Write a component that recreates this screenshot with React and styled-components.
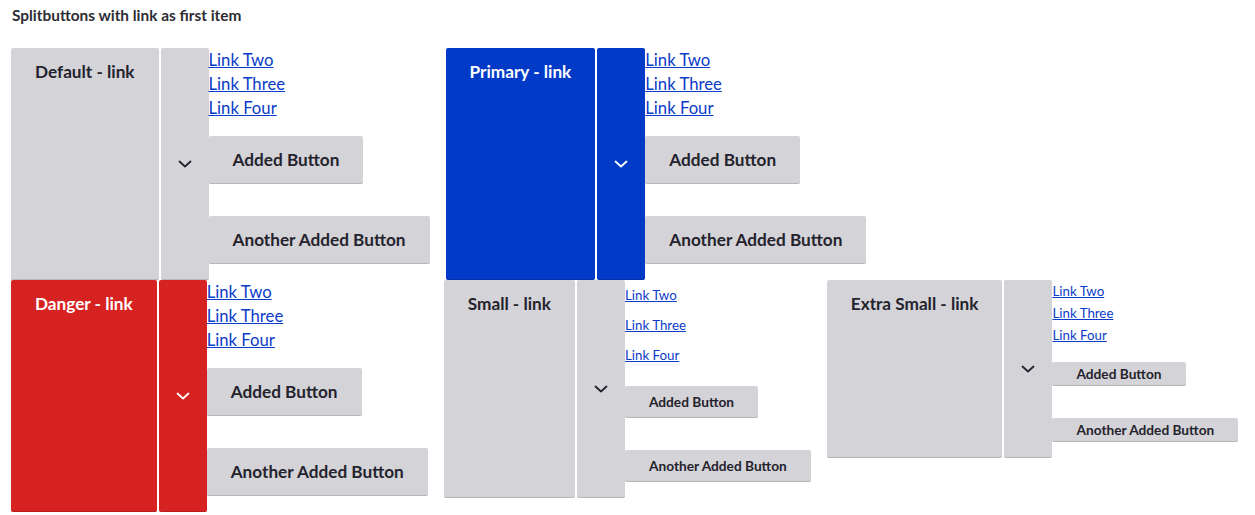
import React from "react";
import styled, { createGlobalStyle, css } from "styled-components";

const GlobalStyle = createGlobalStyle`
  body {
    margin: 0;
    background: #fff;
    font-family: Lato, "Noto Sans", sans-serif;
    color: #24232d;
  }
`;

const colors = {
  default: { bg: "#d4d3d8", fg: "#24232d" },
  primary: { bg: "#003ac7", fg: "#ffffff" },
  danger: { bg: "#d72222", fg: "#ffffff" },
};

const sizes = {
  normal: { font: "17.2px", linkFont: "16.7px", linkLine: "24px", linkPad: "0", btnPad: "12px 24px" },
  small: { font: "13.7px", linkFont: "13.3px", linkLine: "18px", linkPad: "6px 0", btnPad: "4px 24px" },
  xsmall: { font: "13.7px", linkFont: "13.3px", linkLine: "22px", linkPad: "0", btnPad: "0 24px" },
};

const Page = styled.div`
  padding: 5px 11px 0 11px;
`;

const Title = styled.h2`
  margin: 0 0 23px 1px;
  font-size: 15.4px;
  line-height: 20px;
  font-weight: 700;
  color: #2d2c33;
`;

const Groups = styled.div`
  display: flex;
  flex-wrap: wrap;
  column-gap: 16px;
  align-items: flex-start;
`;

const Group = styled.div`
  display: flex;
  align-items: stretch;
`;

const baseBtn = css`
  border: none;
  border-radius: 2px;
  font-family: Lato, "Noto Sans", sans-serif;
  font-weight: 700;
  box-shadow: inset 0 -1px 0 rgba(0, 0, 0, 0.14);
  cursor: pointer;
`;

const MainButton = styled.a`
  ${baseBtn};
  display: block;
  padding: 12px 24px;
  font-size: 17.2px;
  line-height: 24px;
  white-space: nowrap;
  text-decoration: none;
  background: ${(p) => colors[p.$variant].bg};
  color: ${(p) => colors[p.$variant].fg};
`;

const Toggle = styled.button`
  ${baseBtn};
  width: 48px;
  margin-left: 2px;
  padding: 0;
  display: flex;
  align-items: center;
  justify-content: center;
  background: ${(p) => colors[p.$variant].bg};
  color: ${(p) => colors[p.$variant].fg};
  svg {
    display: block;
  }
`;

const Menu = styled.div`
  display: flex;
  flex-direction: column;
  align-items: flex-start;
`;

const MenuLink = styled.a`
  display: block;
  font-size: ${(p) => sizes[p.$size].linkFont};
  line-height: ${(p) => sizes[p.$size].linkLine};
  padding: ${(p) => sizes[p.$size].linkPad};
  color: #0a3bc9;
  text-decoration: underline;
  white-space: nowrap;
`;

const AddedButton = styled.button`
  ${baseBtn};
  margin: 16px 0;
  padding: ${(p) => sizes[p.$size].btnPad};
  font-size: ${(p) => sizes[p.$size].font};
  line-height: 24px;
  white-space: nowrap;
  background: #d4d3d8;
  color: #24232d;
`;

const Chevron = () => (
  <svg width="14" height="8" viewBox="0 0 14 8" fill="none">
    <path d="M1.5 1.5 L7 6.5 L12.5 1.5" stroke="currentColor" strokeWidth="1.8" strokeLinecap="round" strokeLinejoin="round" />
  </svg>
);

const SplitButton = ({ label, variant = "default", size = "normal" }) => (
  <Group>
    <MainButton href="#" $variant={variant}>
      {label}
    </MainButton>
    <Toggle $variant={variant} aria-label="Toggle">
      <Chevron />
    </Toggle>
    <Menu>
      <MenuLink href="#" $size={size}>Link Two</MenuLink>
      <MenuLink href="#" $size={size}>Link Three</MenuLink>
      <MenuLink href="#" $size={size}>Link Four</MenuLink>
      <AddedButton $size={size}>Added Button</AddedButton>
      <AddedButton $size={size}>Another Added Button</AddedButton>
    </Menu>
  </Group>
);

const App = () => (
  <>
    <GlobalStyle />
    <Page>
      <Title>Splitbuttons with link as first item</Title>
      <Groups>
        <SplitButton label="Default - link" />
        <SplitButton label="Primary - link" variant="primary" />
        <SplitButton label="Danger - link" variant="danger" />
        <SplitButton label="Small - link" size="small" />
        <SplitButton label="Extra Small - link" size="xsmall" />
      </Groups>
    </Page>
  </>
);

export default App;
